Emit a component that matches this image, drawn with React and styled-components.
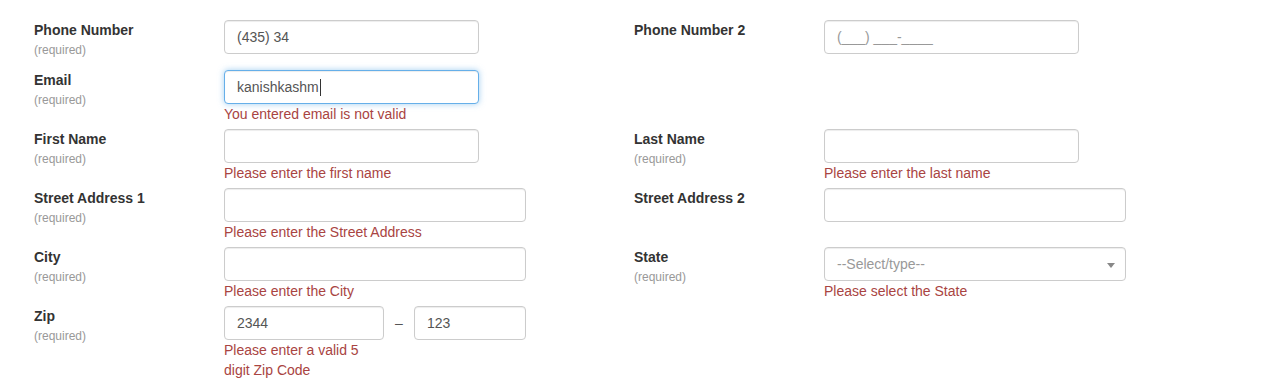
import React from 'react';
import styled, { createGlobalStyle } from 'styled-components';

const GlobalStyle = createGlobalStyle`
  html, body {
    margin: 0;
    padding: 0;
    background: #fff;
    font-family: "Liberation Sans", Arial, sans-serif;
    color: #333;
  }
`;

const Form = styled.div`
  padding: 20px 0 0 34px;
  display: flex;
  flex-direction: column;
`;

const Row = styled.div`
  display: grid;
  grid-template-columns: 600px 600px;
  margin-bottom: ${props => (props.$hasError ? '5px' : '10px')};
`;

const Field = styled.div`
  display: grid;
  grid-template-columns: 190px auto;
  align-items: start;
`;

const LabelBlock = styled.div`
  display: flex;
  flex-direction: column;
`;

const Label = styled.div`
  font-size: 14px;
  font-weight: 700;
  line-height: 20px;
  color: #333;
`;

const Required = styled.div`
  font-size: 12px;
  line-height: 20px;
  color: #999;
`;

const Control = styled.div`
  display: flex;
  flex-direction: column;
  width: ${props => props.$width}px;
`;

const TextBox = styled.div`
  box-sizing: border-box;
  height: 34px;
  width: ${props => (props.$width ? `${props.$width}px` : '100%')};
  padding: 0 12px;
  display: flex;
  align-items: center;
  font-size: 14px;
  color: ${props => (props.$placeholder ? '#999' : '#555')};
  background: #fff;
  border: 1px solid ${props => (props.$focused ? '#66afe9' : '#ccc')};
  border-radius: 4px;
  box-shadow: ${props =>
    props.$focused
      ? 'inset 0 1px 1px rgba(0,0,0,.075), 0 0 6px rgba(102,175,233,.6)'
      : 'inset 0 1px 1px rgba(0,0,0,.075)'};
  position: relative;
`;

const Caret = styled.span`
  display: inline-block;
  width: 1px;
  height: 17px;
  background: #333;
  margin-left: 1px;
`;

const SelectArrow = styled.span`
  position: absolute;
  right: 10px;
  top: 15px;
  width: 0;
  height: 0;
  border-left: 4px solid transparent;
  border-right: 4px solid transparent;
  border-top: 5px solid #888;
`;

const Error = styled.div`
  font-size: 14px;
  line-height: 20px;
  color: #a94442;
  width: ${props => (props.$width ? `${props.$width}px` : 'auto')};
`;

const ZipRow = styled.div`
  display: flex;
  align-items: flex-start;
`;

const ZipPart = styled.div`
  display: flex;
  flex-direction: column;
`;

const Dash = styled.div`
  width: 30px;
  height: 34px;
  line-height: 34px;
  text-align: center;
  font-size: 14px;
  color: #555;
`;

const FieldLabel = ({ title, required }) => (
  <LabelBlock>
    <Label>{title}</Label>
    {required && <Required>(required)</Required>}
  </LabelBlock>
);

const SHORT = 255;
const LONG = 302;

const App = () => (
  <>
    <GlobalStyle />
    <Form>
      <Row>
        <Field>
          <FieldLabel title="Phone Number" required />
          <Control $width={SHORT}>
            <TextBox>(435) 34</TextBox>
          </Control>
        </Field>
        <Field>
          <FieldLabel title="Phone Number 2" />
          <Control $width={SHORT}>
            <TextBox $placeholder>(___) ___-____</TextBox>
          </Control>
        </Field>
      </Row>

      <Row $hasError>
        <Field>
          <FieldLabel title="Email" required />
          <Control $width={SHORT}>
            <TextBox $focused>
              kanishkashm<Caret />
            </TextBox>
            <Error>You entered email is not valid</Error>
          </Control>
        </Field>
        <div />
      </Row>

      <Row $hasError>
        <Field>
          <FieldLabel title="First Name" required />
          <Control $width={SHORT}>
            <TextBox />
            <Error>Please enter the first name</Error>
          </Control>
        </Field>
        <Field>
          <FieldLabel title="Last Name" required />
          <Control $width={SHORT}>
            <TextBox />
            <Error>Please enter the last name</Error>
          </Control>
        </Field>
      </Row>

      <Row $hasError>
        <Field>
          <FieldLabel title="Street Address 1" required />
          <Control $width={LONG}>
            <TextBox />
            <Error>Please enter the Street Address</Error>
          </Control>
        </Field>
        <Field>
          <FieldLabel title="Street Address 2" />
          <Control $width={LONG}>
            <TextBox />
          </Control>
        </Field>
      </Row>

      <Row $hasError>
        <Field>
          <FieldLabel title="City" required />
          <Control $width={LONG}>
            <TextBox />
            <Error>Please enter the City</Error>
          </Control>
        </Field>
        <Field>
          <FieldLabel title="State" required />
          <Control $width={LONG}>
            <TextBox $placeholder>
              --Select/type--
              <SelectArrow />
            </TextBox>
            <Error>Please select the State</Error>
          </Control>
        </Field>
      </Row>

      <Row $hasError>
        <Field>
          <FieldLabel title="Zip" required />
          <Control $width={LONG}>
            <ZipRow>
              <ZipPart>
                <TextBox $width={160}>2344</TextBox>
                <Error $width={160}>Please enter a valid 5 digit Zip Code</Error>
              </ZipPart>
              <Dash>–</Dash>
              <TextBox $width={112}>123</TextBox>
            </ZipRow>
          </Control>
        </Field>
        <div />
      </Row>
    </Form>
  </>
);

export default App;
